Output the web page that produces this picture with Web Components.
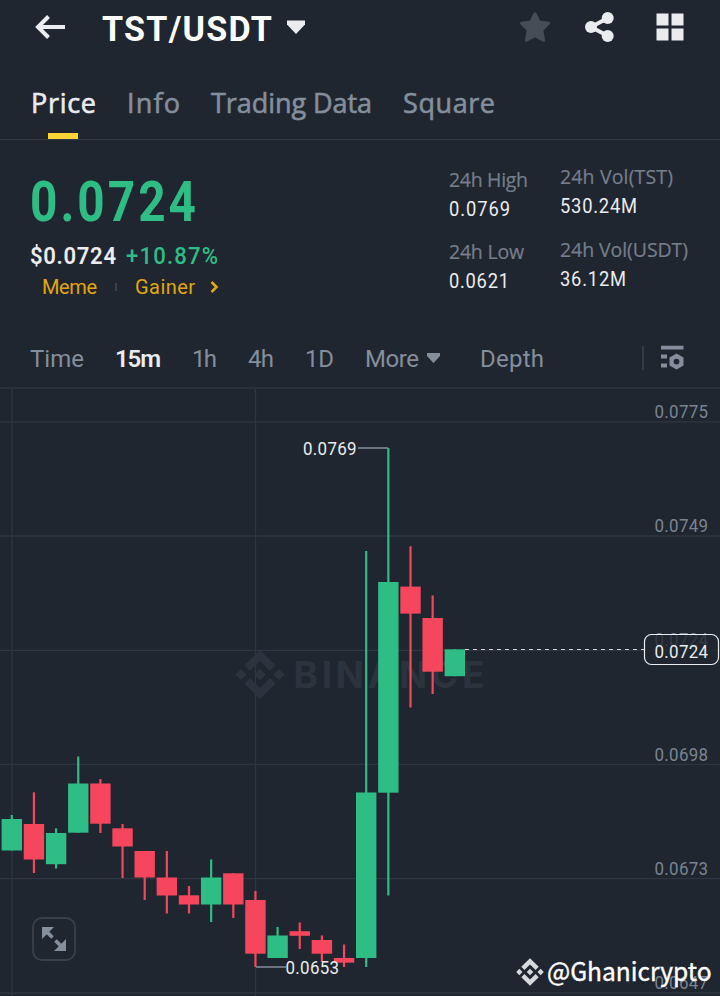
<!DOCTYPE html>
<html lang="en">
<head>
<meta charset="utf-8">
<title>TST/USDT</title>
<style>
  html, body { margin: 0; background: #202630; }
</style>
</head>
<body>
<trade-screen></trade-screen>
<script>
const define = (name, html, init) => {
  const t = document.createElement('template');
  t.innerHTML = html;
  customElements.define(name, class extends HTMLElement {
    constructor() {
      super();
      this.attachShadow({ mode: 'open' }).appendChild(t.content.cloneNode(true));
    }
    connectedCallback() { if (init) init.call(this, this.shadowRoot); }
  });
};

// One line of text, tracked so that it takes the width given in "w".
// "narrow" condenses the glyphs by that factor first.
define('fit-text', `
<style>
  :host { display: inline-block; line-height: 1; white-space: nowrap; flex: none; }
  :host([humanist]) { font-family: "Open Sans", "Noto Sans", sans-serif; }
  span { display: inline-block; transform-origin: 0 0; }
</style><span><slot></slot></span>`, function (root) {
  const w = +this.getAttribute('w');
  const k = +(this.getAttribute('narrow') || 1);
  this.style.fontSize = this.getAttribute('size') + 'px';
  if (this.hasAttribute('weight')) this.style.fontWeight = this.getAttribute('weight');
  const span = root.querySelector('span');
  const n = this.textContent.length;
  const natural = span.getBoundingClientRect().width;
  span.style.letterSpacing = ((w / k - natural) / (n - 1)) + 'px';
  if (k !== 1) span.style.transform = `scaleX(${k})`;
  this.style.width = w + 'px';
});

define('app-header', `
<style>
  :host { display: flex; align-items: center; height: 56px; padding: 0 35px; box-sizing: border-box; color: #fff; }
  svg { display: block; flex: none; }
  .back { margin: -2px 36px 0 0; }
  .title { padding-top: 3px; }
  .caret { margin: -2px auto 0 15px; }
  .star { margin: -2px 35px 0 0; }
  .share { margin: -2px 42px 0 0; }
  .grid { margin: -2px 1px 0 0; }
</style>
<svg class="back" width="31" height="26" viewBox="0 0 31 26" fill="none" stroke="#eaecef" stroke-width="4"><path d="M13.5 2.5 3 13l10.500 10.500M3 13H30" /></svg>
<fit-text class="title" w="170" size="35.500" weight="700" narrow=".96">TST/USDT</fit-text>
<svg class="caret" width="18" height="15" viewBox="0 0 18 15" fill="#eaecef"><path d="M0 0.500H18V4.500L9 14 0 4.500Z"/></svg>
<svg class="star" width="30" height="30" viewBox="0 0 30 30" fill="#474d57" stroke="#474d57" stroke-width="3" stroke-linejoin="round"><path d="M15 1.700 19 10 28.500 11.200 21.800 18 23.500 28.300 15 23.700 6.500 28.300 8.200 18 1.500 11.200 11 10Z"/></svg>
<svg class="share" width="29" height="30" viewBox="0 0 29 30" fill="#eaecef"><path d="M23 6 6 15l17 9" fill="none" stroke="#eaecef" stroke-width="4"/><circle cx="6" cy="15" r="6"/><circle cx="22.700" cy="6" r="6"/><circle cx="22.700" cy="24" r="6"/></svg>
<svg class="grid" width="28" height="28" viewBox="0 0 28 28" fill="#eaecef"><path d="M.5.500h12v12H.5zM15.500.500h12v12h-12zM.5 15.500h12v12H.5zM15.500 15.500h12v12h-12z"/></svg>`);

define('page-tab', `
<style>
  :host { display: flex; flex-direction: column; align-items: center; justify-content: space-between; height: 50px; color: #848e9c; }
  i { width: 30px; height: 6px; }
  :host([active]) { color: #eaecef; }
  :host([active]) i { background: #fcd535; margin-right: 1px; }
</style><slot></slot><i></i>`);

define('page-tabs', `
<style>
  :host { display: flex; align-items: flex-end; gap: 31px; height: 84px; padding-left: 31px; box-sizing: border-box; border-bottom: 1px solid #333b47; -webkit-text-stroke: .6px; }
</style>
<page-tab active><fit-text humanist w="65" size="27">Price</fit-text></page-tab>
<page-tab><fit-text humanist w="53" size="27">Info</fit-text></page-tab>
<page-tab><fit-text humanist w="161" size="27">Trading Data</fit-text></page-tab>
<page-tab><fit-text humanist w="92" size="27">Square</fit-text></page-tab>`);

define('stat-item', `
<style>
  :host { display: flex; flex-direction: column; gap: 10px; height: 72px; color: #eaecef; }
  ::slotted([slot=label]) { color: #767e8c; -webkit-text-stroke: .2px; }
</style><slot name="label"></slot><slot name="value"></slot>`);

define('price-summary', `
<style>
  :host { display: flex; height: 192px; box-sizing: border-box; padding: 27px 0 0 30px; }
  .main { width: 419px; padding-top: 8px; }
  .price { display: block; color: #2ebd85; }
  .row { display: flex; align-items: center; }
  .sub { gap: 10px; color: #eaecef; margin-top: 14px; }
  .up { color: #2ebd85; }
  .tags { color: #e0a80c; padding-left: 12px; margin-top: 9px; }
  .tags i { width: 2px; height: 8px; background: #39414d; margin: 0 18px; }
  .tags svg { margin-left: 15px; }
  .col { padding-top: 3px; width: 111px; }
  .col.last { padding-top: 0; }
  .col.last stat-item { height: 73px; }
</style>
<div class="main">
  <fit-text class="price" w="166" size="55.500" weight="700" narrow=".86">0.0724</fit-text>
  <div class="row sub"><fit-text w="86" size="23.500" weight="600" narrow=".94">$0.0724</fit-text><fit-text class="up" w="92" size="23.500" weight="500" narrow=".94">+10.87%</fit-text></div>
  <div class="row tags"><fit-text w="55" size="20">Meme</fit-text><i></i><fit-text w="60" size="20">Gainer</fit-text>
  <svg width="9" height="12" viewBox="0 0 9 12" fill="none" stroke="#e0a80c" stroke-width="2.600"><path d="m1.500 1 5 5-5 5"/></svg></div>
</div>
<div class="col">
  <stat-item><fit-text humanist slot="label" w="79" size="19.500">24h High</fit-text><fit-text slot="value" w="61" size="19.500" narrow=".94">0.0769</fit-text></stat-item>
  <stat-item><fit-text humanist slot="label" w="75" size="19.500">24h Low</fit-text><fit-text slot="value" w="60" size="19.500" narrow=".94">0.0621</fit-text></stat-item>
</div>
<div class="col last">
  <stat-item><fit-text humanist slot="label" w="113" size="19.500">24h Vol(TST)</fit-text><fit-text slot="value" w="77" size="19.500" narrow=".94">530.24M</fit-text></stat-item>
  <stat-item><fit-text humanist slot="label" w="128" size="19.500">24h Vol(USDT)</fit-text><fit-text slot="value" w="66" size="19.500" narrow=".94">36.12M</fit-text></stat-item>
</div>`);

define('interval-bar', `
<style>
  :host { display: flex; align-items: center; height: 57px; padding: 0 36px 3px 30px; box-sizing: border-box; color: #848e9c; border-bottom: 2px solid #2b313c; }
  svg, i { flex: none; }
  fit-text { padding-top: 2px; }
  .sel { color: #eaecef; }
  .caret { margin: -1px 40px 0 8px; }
  .settings { margin-left: 16px; margin-top: -1px; }
  i { width: 2px; height: 24px; background: #333b47; margin-left: auto; margin-top: -1px; }
</style>
<fit-text w="54" size="24" style="margin-right:31px">Time</fit-text>
<fit-text class="sel" w="46" size="24" weight="600" style="margin-right:31px">15m</fit-text>
<fit-text w="25" size="24" style="margin-right:31px">1h</fit-text>
<fit-text w="26" size="24" style="margin-right:31px">4h</fit-text>
<fit-text w="29" size="24" style="margin-right:31px">1D</fit-text>
<fit-text w="54" size="24">More</fit-text>
<svg class="caret" width="13" height="10" viewBox="0 0 13 10" fill="#848e9c"><path d="M0 0H13V3L6.500 10 0 3Z"/></svg>
<fit-text w="64" size="24">Depth</fit-text>
<i></i>
<svg class="settings" width="24" height="25" viewBox="0 0 24 25" fill="#848e9c"><path d="M1 .7H23.500V4.500H1zM1 9.500H7V13.500H1zM1 18.500H7V22.500H1z"/><path fill-rule="evenodd" d="M16.500 8.500 23.500 12.500V20.500L16.500 24.500 9.500 20.500V12.500ZM16.500 13.700a2.900 2.900 0 1 0 0 5.800 2.900 2.900 0 0 0 0-5.800Z"/></svg>`);

define('candle-chart', `
<style>
  :host { display: block; height: 607px; overflow: hidden; }
  svg { display: block; }
  .axis { fill: #7b8391; }
  .mark { font-family: Inter, sans-serif; font-weight: 700; font-size: 37px; fill: #2d333e; }
  .tag { fill: #eaecef; }
  .user { font-family: "Noto Sans CJK SC", "Noto Sans", sans-serif; font-size: 25.500px; fill: #fff; stroke: #fff; stroke-width: .4px; }
</style>
<svg width="720" height="607" viewBox="0 389 720 607" font-size="18">
  <defs><g id="logo"><path d="M0-24.500 15.500-9.300 10-3.600 0-13.400-10-3.600-15.500-9.300ZM0 24.500 15.500 9.300 10 3.600 0 13.400-10 3.600-15.500 9.300ZM0-5.800 5.800 0 0 5.800-5.800 0ZM-19-5.600-13.400 0-19 5.600-24.600 0ZM19-5.600 24.600 0 19 5.600 13.400 0Z"/></g></defs>
  <g class="grid" stroke="#2f3641" stroke-width="1.300"></g>
  <use href="#logo" transform="translate(260 674.500)" fill="#2d333e"/>
  <text class="mark" x="293.500" y="688" textLength="191">BINANCE</text>
  <g class="candles"></g>
  <path d="M358 448H388M256 967H286" stroke="#848e9c" stroke-width="1.600"/>
  <g class="axis"></g>
  <path d="M465 649.500H644" stroke="#cdd1d7" stroke-width="1.200" stroke-dasharray="4 4"/>
  <rect x="644.500" y="634.500" width="74" height="30" rx="7" fill="#202630" fill-opacity=".78" stroke="#eaecef" stroke-width="1.200"/>
  <g class="tag"></g>
  <rect x="33" y="918" width="42" height="42" rx="9" fill="#202630" stroke="#39404c" stroke-width="1.800"/>
  <g fill="#848e9c"><path d="M42 927H54L42 939ZM66 951H54L66 939Z"/><path d="m46 931 6.500 6.500M62 947l-6.500-6.500" stroke="#848e9c" stroke-width="3.800"/></g>
  <use href="#logo" transform="translate(530 972) scale(.56)" fill="#d8d9dc"/>
  <text class="user" x="547" y="981" textLength="164.500" lengthAdjust="spacingAndGlyphs">@Ghanicrypto</text>
</svg>`, function (root) {
  // color, body top, body bottom, high, low
  const data = [
    ['g',819,850.5,815,850.5],['r',824,859.5,792.3,873],['g',833,864.2,828.3,868.5],
    ['g',783.5,832.7,756.5,832.7],['r',783.5,823.7,779,833],['r',828.3,846.5,824,878],
    ['r',851,877.5,851,900],['r',877.5,895.5,851,913.5],['r',895.3,904.5,886,913.5],
    ['g',877.5,904.5,859.5,922],['r',873.3,904.5,873.3,918],['r',900,953.7,891,967],
    ['g',935.5,958,927,958],['r',931.2,935.8,922.5,949],['r',940,953.7,935.5,962],
    ['r',958,962.7,944.5,967],['g',792.5,958,551,967],['g',582,792.7,448,895.5],
    ['r',586.6,613.6,546.3,707.5],['r',618,671.7,595.5,694],['g',649.3,676.2,649.3,676.2]];
  root.querySelector('.candles').innerHTML = data.map(([c, t, b, h, l], i) => {
    const x = 11.8 + i * 22.15;
    return `<g fill="${c === 'g' ? '#2ebd85' : '#f6465d'}"><rect x="${x - 1.1}" y="${h}" width="2.200" height="${l - h}"/><rect x="${x - 10.2}" y="${t}" width="20.400" height="${b - t}"/></g>`;
  }).join('');
  root.querySelector('.grid').innerHTML =
    [421.8, 536, 650.4, 764.4, 878.6, 993].map(y => `<path d="M0 ${y}H720"/>`).join('') +
    [12, 255.5].map(x => `<path d="M${x} 389V996"/>`).join('');
  const num = ([x, y, s]) => `<text transform="translate(${x} ${y}) scale(.94 1)" textLength="57">${s}</text>`;
  root.querySelector('.axis').innerHTML =
    [[418, '0.0775'], [532, '0.0749'], [646, '0.0724'], [761, '0.0698'], [875, '0.0673'], [989, '0.0647']]
      .map(([y, s]) => num([654.5, y, s])).join('');
  root.querySelector('.tag').innerHTML =
    [[303, 455, '0.0769'], [285.5, 974, '0.0653'], [654.5, 658, '0.0724']].map(num).join('');
});

define('trade-screen', `
<style>
  :host { display: block; width: 720px; height: 996px; overflow: hidden; background: #202630; font-family: Roboto, "Liberation Sans", sans-serif; }
</style>
<app-header></app-header>
<page-tabs></page-tabs>
<price-summary></price-summary>
<interval-bar></interval-bar>
<candle-chart></candle-chart>`);
</script>
</body>
</html>
